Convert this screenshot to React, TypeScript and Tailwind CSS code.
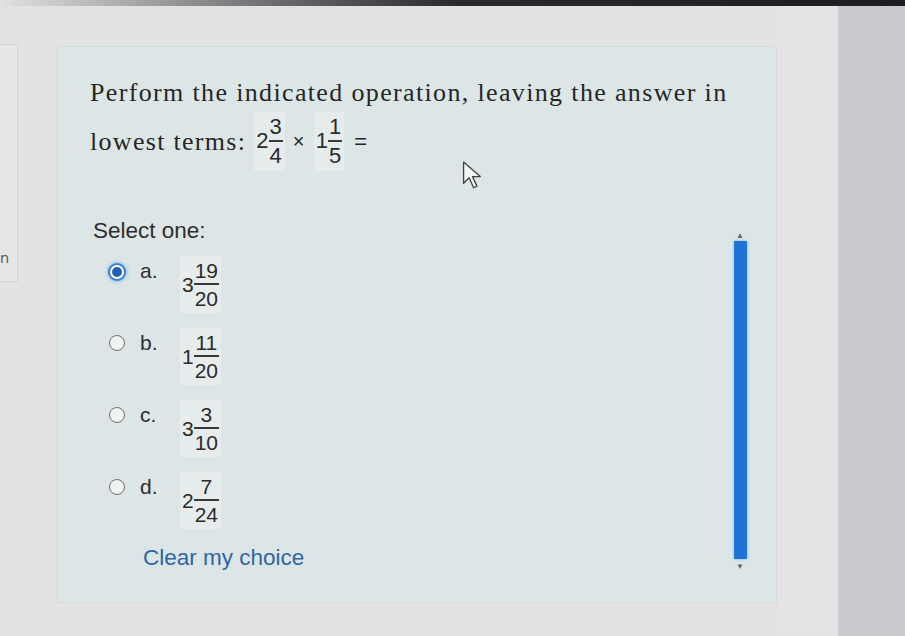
import type { ReactNode } from 'react';

type Choice = {
    letter: string;
    whole: string;
    num: string;
    den: string;
    selected?: boolean;
};

const choices: Choice[] = [
    { letter: 'a.', whole: '3', num: '19', den: '20', selected: true },
    { letter: 'b.', whole: '1', num: '11', den: '20' },
    { letter: 'c.', whole: '3', num: '3', den: '10' },
    { letter: 'd.', whole: '2', num: '7', den: '24' },
];

function Frac({ whole, num, den, big }: { whole: string; num: string; den: string; big?: boolean }) {
    return (
        <span
            className={
                'inline-flex items-center bg-[#e6ecec] font-["Liberation_Sans",Arial,sans-serif] tracking-normal text-[#2b2b2b] ' +
                (big ? 'px-[2px] py-[4px] text-[22px]' : 'px-[2px] py-[4px] text-[21px]')
            }
        >
            <span className="leading-none">{whole}</span>
            <span className="inline-flex flex-col items-center leading-none">
                <span className="px-[1px] pb-[2px]">{num}</span>
                <span className="h-[2px] w-full bg-[#3a3a3a]" />
                <span className="px-[1px] pt-[3px]">{den}</span>
            </span>
        </span>
    );
}

function Radio({ selected }: { selected?: boolean }) {
    if (selected) {
        return (
            <span className="flex h-[18px] w-[18px] items-center justify-center rounded-full border-2 border-[#3a7fd6] bg-white shadow-[0_0_4px_#6aa6ee]">
                <span className="h-[10px] w-[10px] rounded-full bg-[#1f5fb8]" />
            </span>
        );
    }
    return <span className="block h-[16px] w-[16px] rounded-full border-[1.5px] border-[#6e6e6e] bg-[#f2f4f4]" />;
}

function Row({ children }: { children: ReactNode }) {
    return <div className="flex items-start">{children}</div>;
}

export default function App() {
    return (
        <div className="relative flex h-[636px] w-[905px] flex-col overflow-hidden bg-[#e3e2e2]">
            <div className="h-[6px] w-full shrink-0 bg-gradient-to-r from-[#e3e2e2] via-[#2a2a30] to-[#1c1c22]" />

            <div className="flex min-h-0 flex-1">
                {/* left stub panel */}
                <div className="mt-[38px] flex h-[238px] w-[18px] items-end border border-l-0 border-[#d4d4d4] bg-[#e6e6e6] pb-[16px]">
                    <span className="font-['Open_Sans',sans-serif] text-[15px] leading-none text-[#555]">n</span>
                </div>

                {/* question card */}
                <div className="mb-[33px] ml-[39px] mt-[40px] flex w-[720px] rounded-[3px] border border-[#d2dcdc] bg-[#dde6e6]">
                    <div className="flex-1 pl-[32px] pt-[24px]">
                        <p className="whitespace-nowrap font-['Liberation_Serif',serif] text-[26px] leading-[44px] tracking-[1.35px] text-[#262626]">
                            Perform the indicated operation, leaving the answer in
                        </p>
                        <div className="-mt-[4px] flex h-[60px] items-center whitespace-nowrap font-['Liberation_Serif',serif] text-[26px] tracking-[1.3px] text-[#262626]">
                            <span>lowest terms:</span>
                            <span className="ml-[8px]">
                                <Frac whole="2" num="3" den="4" big />
                            </span>
                            <span className="mx-[8px] font-['Liberation_Sans',sans-serif] text-[20px]">×</span>
                            <Frac whole="1" num="1" den="5" big />
                            <span className="ml-[10px] font-['Liberation_Sans',sans-serif] text-[22px]">=</span>
                            <svg className="ml-[93px] mt-[50px] shrink-0 self-start" width="23" height="29" viewBox="0 0 20 26">
                                <path d="M2 1 L2 20 L7 15 L11 24 L14 22.5 L10 14 L17 14 Z" fill="#f4f6f6" stroke="#444" strokeWidth="1.2" strokeLinejoin="round" />
                            </svg>
                        </div>

                        <p className="mt-[43px] pl-[3px] font-['Liberation_Sans',Arial,sans-serif] text-[22.5px] text-[#2e2e2e]">Select one:</p>

                        <div className="mt-[8px] flex flex-col gap-[15px] pl-[12px]">
                            {choices.map((c) => (
                                <Row key={c.letter}>
                                    <span className="mt-[7px] flex w-[30px] justify-center">
                                        <Radio selected={c.selected} />
                                    </span>
                                    <span className="ml-[8px] mt-[3px] w-[40px] font-['Liberation_Sans',Arial,sans-serif] text-[21px] leading-[24px] text-[#2e2e2e]">
                                        {c.letter}
                                    </span>
                                    <Frac whole={c.whole} num={c.num} den={c.den} />
                                </Row>
                            ))}
                        </div>

                        <p className="mt-[12px] pl-[53px] font-['Liberation_Sans',Arial,sans-serif] text-[22.5px] text-[#2f66a3]">Clear my choice</p>
                    </div>

                    {/* scrollbar */}
                    <div className="mr-[28px] mt-[182px] flex w-[16px] flex-col items-center">
                        <span className="text-[8px] leading-[12px] text-[#666]">▲</span>
                        <div className="h-[318px] w-[13px] bg-[#1d74d6] shadow-[0_0_3px_#7fb6f0]" />
                        <span className="text-[8px] leading-[14px] text-[#666]">▼</span>
                    </div>
                </div>

                <div className="ml-[1px] w-[60px] bg-[#e4e4e6]" />
                <div className="flex-1 bg-[#c9cbd1]" />
            </div>
        </div>
    );
}
